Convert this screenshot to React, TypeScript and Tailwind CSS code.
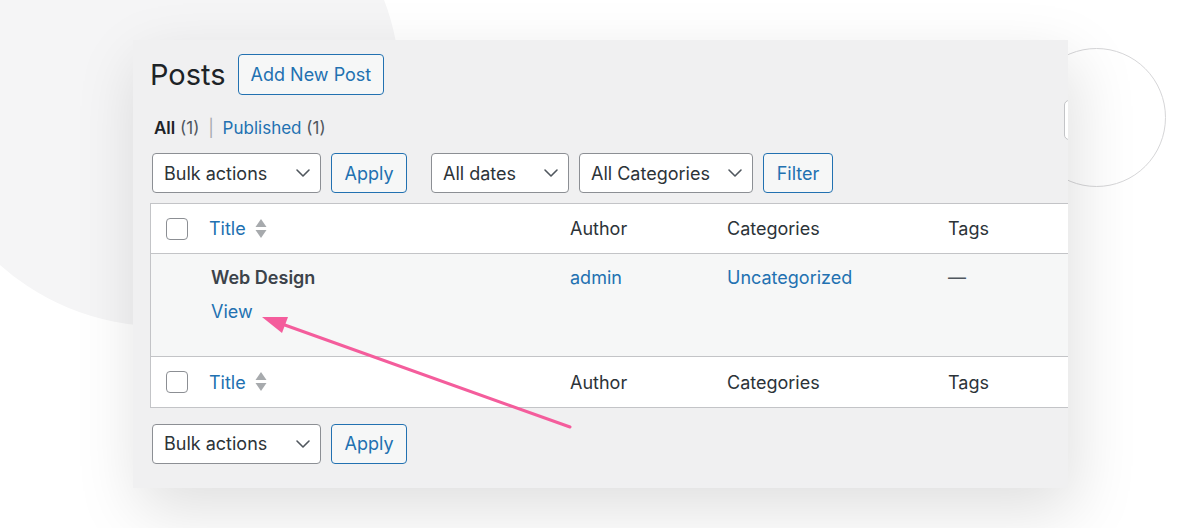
import { ChevronDown } from 'lucide-react';

function Select({ label, width }: { label: string; width: string }) {
  return (
    <div
      className={`flex h-[40px] ${width} items-center justify-between rounded-[4px] border border-[#8c8f94] bg-white pl-[11px] pr-[5px] text-[18px] text-[#2c3338]`}
    >
      <span>{label}</span>
      <ChevronDown className="h-[24px] w-[24px] text-[#50575e]" strokeWidth={1.6} />
    </div>
  );
}

function SecondaryButton({ label, width }: { label: string; width: string }) {
  return (
    <button
      className={`flex h-[40px] ${width} items-center justify-center rounded-[4px] border border-[#2271b1] bg-[#f6f7f7] text-[18px] text-[#2271b1]`}
    >
      {label}
    </button>
  );
}

function Checkbox() {
  return <span className="block h-[22px] w-[22px] rounded-[4px] border border-[#8c8f94] bg-white" />;
}

function SortArrows() {
  return (
    <svg width="12" height="20" viewBox="0 0 12 20" className="ml-[9px]">
      <polygon points="6,0 0.5,8 11.5,8" fill="#a7aaad" />
      <polygon points="0.5,11 11.5,11 6,19" fill="#a7aaad" />
    </svg>
  );
}

function HeaderRow({ border }: { border: 'top' | 'bottom' }) {
  return (
    <div
      className={`grid h-[50px] grid-cols-[58px_361px_157px_221px_1fr] items-center bg-white text-[18px] text-[#2c3338] ${
        border === 'bottom' ? 'border-b border-[#c3c4c7]' : ''
      }`}
    >
      <div className="pl-[15px]">
        <Checkbox />
      </div>
      <div className="flex items-center">
        <span className="text-[#2271b1]">Title</span>
        <SortArrows />
      </div>
      <div>Author</div>
      <div>Categories</div>
      <div>Tags</div>
    </div>
  );
}

export default function App() {
  return (
    <div className="relative h-[528px] w-[1200px] overflow-hidden bg-white font-[Inter,'Noto_Sans',sans-serif]">
      {/* background decoration */}
      <div className="absolute left-[-80px] top-[-154px] h-[480px] w-[480px] rounded-full bg-[#f5f5f6]" />
      <div className="absolute left-[1027px] top-[48px] h-[139px] w-[139px] rounded-full border border-[#d6d6d8]" />

      <div className="relative pl-[133px] pt-[40px]">
        <div className="relative h-[448px] w-[935px] overflow-hidden bg-[#f0f0f1] shadow-[6px_22px_60px_rgba(0,0,0,0.13)]">
          <div className="w-[1031px] pl-[17px] pt-[14px]">
            {/* heading */}
            <div className="flex h-[41px] items-center gap-[12px]">
              <h1 className="text-[29px] font-normal leading-none text-[#1d2327]">Posts</h1>
              <button className="h-[41px] rounded-[4px] border border-[#2271b1] bg-[#f6f7f7] px-[12px] text-[18px] text-[#2271b1]">
                Add New Post
              </button>
            </div>

            {/* views + search */}
            <div className="mt-[5px] flex h-[40px] items-end justify-between">
              <div className="pl-[4px] text-[17px] leading-[24px] text-[#50575e]">
                <span className="font-semibold text-[#1d2327]">All</span> (1){' '}
                <span className="mx-[4px] text-[#a7aaad]">|</span>{' '}
                <span className="text-[#2271b1]">Published</span> (1)
              </div>
              <div className="h-[40px] w-[100px] rounded-[5px] border border-[#c3c4c7] bg-white" />
            </div>

            {/* filters */}
            <div className="mt-[13px] flex h-[40px] items-center pl-[2px]">
              <Select label="Bulk actions" width="w-[169px]" />
              <div className="ml-[10px]">
                <SecondaryButton label="Apply" width="w-[76px]" />
              </div>
              <div className="ml-[24px]">
                <Select label="All dates" width="w-[138px]" />
              </div>
              <div className="ml-[10px]">
                <Select label="All Categories" width="w-[174px]" />
              </div>
              <div className="ml-[10px]">
                <SecondaryButton label="Filter" width="w-[70px]" />
              </div>
            </div>

            {/* posts table */}
            <div className="mt-[10px] border border-[#c3c4c7] bg-white">
              <HeaderRow border="bottom" />
              <div className="grid h-[103px] grid-cols-[58px_361px_157px_221px_1fr] border-b border-[#c3c4c7] bg-[#f6f7f7] pt-[12px] text-[18px] leading-[24px]">
                <div />
                <div className="pl-[2px]">
                  <div className="font-semibold text-[#3c434a]">Web Design</div>
                  <div className="mt-[10px] text-[#2271b1]">View</div>
                </div>
                <div className="text-[#2271b1]">admin</div>
                <div className="text-[#2271b1]">Uncategorized</div>
                <div className="text-[#50575e]">—</div>
              </div>
              <HeaderRow border="top" />
            </div>

            {/* bottom bulk actions */}
            <div className="mt-[15px] flex h-[41px] items-center pl-[2px]">
              <Select label="Bulk actions" width="w-[169px]" />
              <div className="ml-[10px]">
                <SecondaryButton label="Apply" width="w-[76px]" />
              </div>
            </div>
          </div>
        </div>
      </div>

      {/* annotation arrow */}
      <svg className="pointer-events-none absolute left-0 top-0" width="1200" height="528" viewBox="0 0 1200 528">
        <line x1="570" y1="427" x2="282" y2="324" stroke="#f45d9c" strokeWidth="3" strokeLinecap="round" />
        <polygon points="262,317 288,317 282,333" fill="#f45d9c" />
      </svg>
    </div>
  );
}
